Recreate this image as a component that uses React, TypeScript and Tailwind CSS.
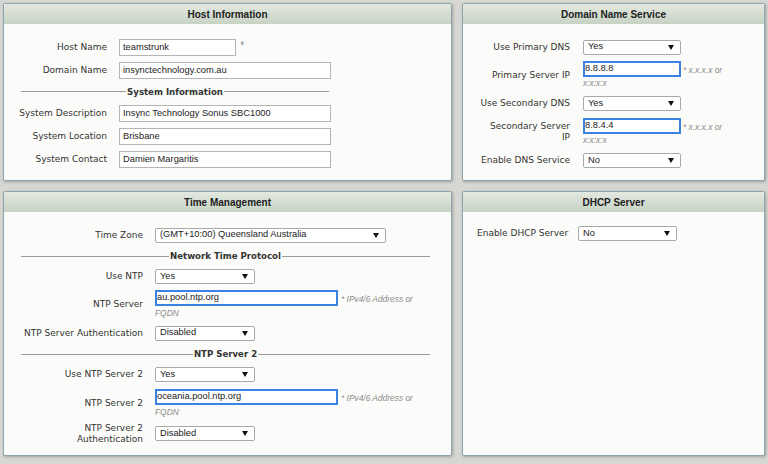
import React from "react";

const LABEL = "font-['DejaVu_Sans',Verdana,sans-serif] text-[9px] leading-[11px] text-[#333]";
const FIELD = "font-['Liberation_Sans',Arial,sans-serif] text-[9.3px] text-[#222]";
const HINT = "font-['Liberation_Sans',Arial,sans-serif] italic text-[8.4px] leading-[12px] text-[#8a8a8a]";

function Panel({ title, children }: { title: string; children: React.ReactNode }) {
  return (
    <div className="flex flex-col bg-[#fbfcf9] border border-[#8fa3ad] rounded-[2px] shadow-[1px_1px_3px_rgba(0,0,0,0.25)] overflow-hidden">
      <div className="h-[20px] shrink-0 flex items-center justify-center bg-gradient-to-b from-[#e3e9e0] to-[#c7d2c4] font-['Liberation_Sans',Arial,sans-serif] font-bold text-[10px] text-[#222]">
        {title}
      </div>
      <div className="flex flex-col">{children}</div>
    </div>
  );
}

function Input({ value, w, focus }: { value: string; w: string; focus?: boolean }) {
  return (
    <div
      className={`${w} ${FIELD} flex items-center bg-white ${
        focus ? "h-[16px] border-2 border-[#3a82e4] pl-[0px]" : "h-[17px] border border-[#b4b4b4] pl-[3px]"
      }`}
    >
      {value}
    </div>
  );
}

function Select({ value, w }: { value: string; w: string }) {
  return (
    <div className={`${w} ${FIELD} relative h-[15px] flex items-center pl-[4px] bg-white border border-[#a9a9a9] rounded-[2px]`}>
      {value}
      <svg className="absolute right-[6px] top-[4px]" width="6" height="5" viewBox="0 0 6 5">
        <path d="M0 0H6L3 5Z" fill="#111" />
      </svg>
    </div>
  );
}

function Divider({ title, ml, w, h }: { title: string; ml: string; w: string; h: string }) {
  return (
    <div className={`${h} flex items-center`}>
      <div className={`${ml} ${w} flex items-center`}>
        <div className="flex-1 h-px bg-[#9a9a9a]" />
        <span className="px-[1px] font-['DejaVu_Sans',Verdana,sans-serif] font-bold text-[8.6px] text-[#333]">{title}</span>
        <div className="flex-1 h-px bg-[#9a9a9a]" />
      </div>
    </div>
  );
}

export default function App() {
  return (
    <div className="w-[768px] h-[464px] bg-[#d6d6d2] p-[3px] grid grid-cols-[449px_303px] grid-rows-[178px_265px] gap-[10px]">
      {/* Host Information */}
      <Panel title="Host Information">
        <div className="h-[12px]" />
        <div className="h-[23px] flex items-center">
          <div className={`w-[103px] text-right ${LABEL}`}>Host Name</div>
          <div className="ml-[12px] flex items-center">
            <Input value="teamstrunk" w="w-[117px]" />
            <span className="ml-[4px] mb-[5px] text-[8px] text-[#888]">*</span>
          </div>
        </div>
        <div className="h-[23px] flex items-center">
          <div className={`w-[103px] text-right ${LABEL}`}>Domain Name</div>
          <div className="ml-[12px]">
            <Input value="insynctechnology.com.au" w="w-[212px]" />
          </div>
        </div>
        <Divider title="System Information" ml="ml-[17px]" w="w-[308px]" h="h-[20px]" />
        {[
          ["System Description", "Insync Technology Sonus SBC1000"],
          ["System Location", "Brisbane"],
          ["System Contact", "Damien Margaritis"],
        ].map(([l, v]) => (
          <div key={l} className="h-[23px] flex items-center">
            <div className={`w-[103px] text-right ${LABEL}`}>{l}</div>
            <div className="ml-[12px]">
              <Input value={v} w="w-[212px]" />
            </div>
          </div>
        ))}
      </Panel>

      {/* Domain Name Service */}
      <Panel title="Domain Name Service">
        <div className="h-[12px]" />
        <div className="h-[22px] flex items-center">
          <div className={`ml-[11px] w-[96px] text-right ${LABEL}`}>Use Primary DNS</div>
          <div className="ml-[13px]">
            <Select value="Yes" w="w-[98px]" />
          </div>
        </div>
        <div className="h-[34px] flex items-center">
          <div className={`ml-[11px] w-[96px] text-right ${LABEL}`}>Primary Server IP</div>
          <div className="ml-[13px] flex flex-col">
            <div className="flex items-start">
              <Input value="8.8.8.8" w="w-[98px]" focus />
              <span className={`ml-[2px] mt-[3px] ${HINT}`}>* x.x.x.x or</span>
            </div>
            <span className={HINT}>x:x:x:x</span>
          </div>
        </div>
        <div className="h-[23px] flex items-center">
          <div className={`ml-[11px] w-[96px] text-right ${LABEL}`}>Use Secondary DNS</div>
          <div className="ml-[13px]">
            <Select value="Yes" w="w-[98px]" />
          </div>
        </div>
        <div className="h-[34px] flex items-center">
          <div className={`ml-[11px] w-[96px] text-right ${LABEL}`}>
            Secondary Server
            <br />
            IP
          </div>
          <div className="ml-[13px] flex flex-col">
            <div className="flex items-start">
              <Input value="8.8.4.4" w="w-[98px]" focus />
              <span className={`ml-[2px] mt-[3px] ${HINT}`}>* x.x.x.x or</span>
            </div>
            <span className={HINT}>x:x:x:x</span>
          </div>
        </div>
        <div className="h-[23px] flex items-center">
          <div className={`ml-[11px] w-[96px] text-right ${LABEL}`}>Enable DNS Service</div>
          <div className="ml-[13px]">
            <Select value="No" w="w-[98px]" />
          </div>
        </div>
      </Panel>

      {/* Time Management */}
      <Panel title="Time Management">
        <div className="h-[12px]" />
        <div className="h-[22px] flex items-center">
          <div className={`w-[139px] text-right ${LABEL}`}>Time Zone</div>
          <div className="ml-[12px]">
            <Select value="(GMT+10:00) Queensland Australia" w="w-[231px]" />
          </div>
        </div>
        <Divider title="Network Time Protocol" ml="ml-[17px]" w="w-[409px]" h="h-[21px]" />
        <div className="h-[19px] flex items-center">
          <div className={`w-[139px] text-right ${LABEL}`}>Use NTP</div>
          <div className="ml-[12px]">
            <Select value="Yes" w="w-[100px]" />
          </div>
        </div>
        <div className="h-[37px] flex items-center">
          <div className={`w-[139px] text-right ${LABEL}`}>NTP Server</div>
          <div className="ml-[12px] flex flex-col">
            <div className="flex items-start">
              <Input value="au.pool.ntp.org" w="w-[183px]" focus />
              <span className={`ml-[3px] mt-[3px] ${HINT}`}>* IPv4/6 Address or</span>
            </div>
            <span className={`mt-[1px] ${HINT}`}>FQDN</span>
          </div>
        </div>
        <div className="h-[20px] flex items-center">
          <div className={`w-[139px] text-right ${LABEL}`}>NTP Server Authentication</div>
          <div className="ml-[12px]">
            <Select value="Disabled" w="w-[100px]" />
          </div>
        </div>
        <Divider title="NTP Server 2" ml="ml-[17px]" w="w-[409px]" h="h-[23px]" />
        <div className="h-[17px] flex items-center">
          <div className={`w-[139px] text-right ${LABEL}`}>Use NTP Server 2</div>
          <div className="ml-[12px]">
            <Select value="Yes" w="w-[100px]" />
          </div>
        </div>
        <div className="h-[41px] flex items-center">
          <div className={`w-[139px] text-right ${LABEL}`}>NTP Server 2</div>
          <div className="ml-[12px] flex flex-col">
            <div className="flex items-start">
              <Input value="oceania.pool.ntp.org" w="w-[183px]" focus />
              <span className={`ml-[3px] mt-[3px] ${HINT}`}>* IPv4/6 Address or</span>
            </div>
            <span className={`mt-[1px] ${HINT}`}>FQDN</span>
          </div>
        </div>
        <div className="h-[19px] flex items-center">
          <div className={`w-[139px] text-right ${LABEL}`}>
            NTP Server 2
            <br />
            Authentication
          </div>
          <div className="ml-[12px]">
            <Select value="Disabled" w="w-[100px]" />
          </div>
        </div>
      </Panel>

      {/* DHCP Server */}
      <Panel title="DHCP Server">
        <div className="h-[12px]" />
        <div className="h-[19px] flex items-center">
          <div className={`ml-[14px] w-[101px] shrink-0 whitespace-nowrap ${LABEL}`}>Enable DHCP Server</div>
          <Select value="No" w="w-[99px]" />
        </div>
      </Panel>
    </div>
  );
}
